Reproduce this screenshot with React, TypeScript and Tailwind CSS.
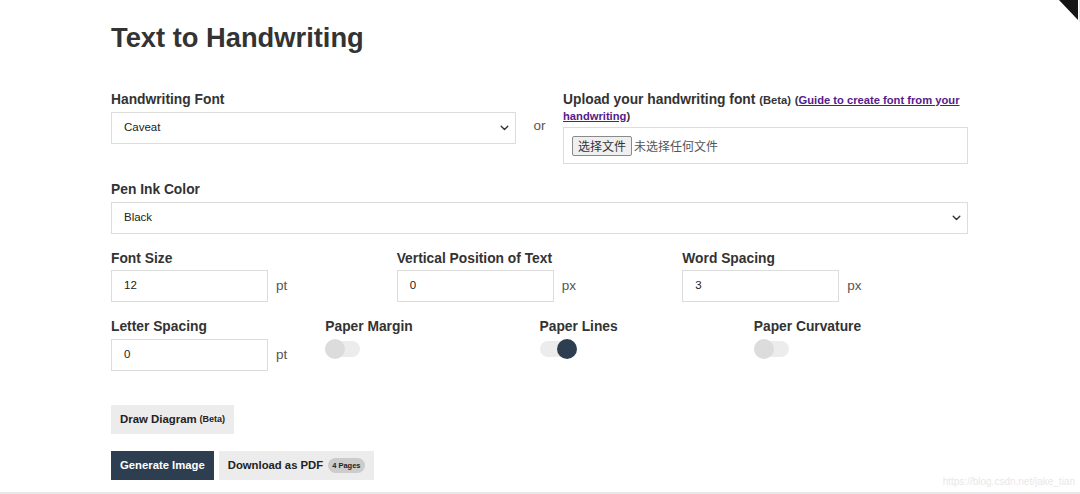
import React from "react";

function Chevron() {
  return (
    <svg width="9" height="6" viewBox="0 0 9 6" className="shrink-0">
      <path d="M1.2 1.2 L4.5 4.5 L7.8 1.2" fill="none" stroke="#333" strokeWidth="1.4" strokeLinecap="round" strokeLinejoin="round" />
    </svg>
  );
}

function Select({ value }: { value: string }) {
  return (
    <div className="h-[32px] border border-[#dcdcdc] flex items-center justify-between pl-[12px] pr-[6px] text-[11.5px] text-[#222] bg-white">
      <span>{value}</span>
      <Chevron />
    </div>
  );
}

function Label({ children }: { children: React.ReactNode }) {
  return <div className="text-[13.8px] leading-[16px] font-bold text-[#333]">{children}</div>;
}

function NumField({ label, value, unit, mt = "mt-[3px]" }: { label: string; value: string; unit: string; mt?: string }) {
  return (
    <div>
      <Label>{label}</Label>
      <div className={`${mt} flex items-center`}>
        <div className="w-[157px] h-[32px] border border-[#dcdcdc] pl-[12px] flex items-center text-[11.5px] text-[#222]">{value}</div>
        <span className="ml-[8px] text-[13.5px] text-[#555]">{unit}</span>
      </div>
    </div>
  );
}

function Toggle({ label, on }: { label: string; on: boolean }) {
  return (
    <div>
      <Label>{label}</Label>
      <div className="mt-[4px] h-[20px] flex items-center">
        <div className="relative w-[35px] h-[16px] rounded-full bg-[#ececec]">
          <div
            className={
              on
                ? "absolute right-[-2px] top-[-2px] w-[20px] h-[20px] rounded-full bg-[#2c3e50]"
                : "absolute left-0 top-[-2px] w-[20px] h-[20px] rounded-full bg-[#dcdcdc]"
            }
          />
        </div>
      </div>
    </div>
  );
}

export default function App() {
  return (
    <div className="relative bg-white min-h-[494px] overflow-hidden font-['Liberation_Sans',Arial,sans-serif] text-[#333]">
      <div className="ml-[111px] w-[857px] pt-[22px]">
        <h1 className="text-[27.3px] leading-[32px] font-bold text-[#333]">Text to Handwriting</h1>

        <div className="mt-[38px] flex">
          <div className="w-[405px]">
            <Label>Handwriting Font</Label>
            <div className="mt-[4px]">
              <Select value="Caveat" />
            </div>
          </div>
          <div className="w-[47px] flex justify-center pt-[26px]">
            <span className="text-[13.5px] leading-[16px] text-[#555]">or</span>
          </div>
          <div className="w-[405px]">
            <div className="text-[13.8px] leading-[16px] font-bold text-[#333]">
              Upload your handwriting font{" "}
              <span className="text-[11.2px] leading-[16px]">(Beta)</span>{" "}
              <span className="text-[11.2px] leading-[16px]">
                (<a className="text-[#551a8b] underline">Guide to create font from your handwriting</a>)
              </span>
            </div>
            <div className="mt-[3px] h-[37px] border border-[#dcdcdc] flex items-center pl-[8px]">
              <div className="h-[20px] px-[5px] flex items-center border border-[#8a8a8a] rounded-[2px] bg-[#efefef] text-[12px] text-[#333] font-['Noto_Sans_CJK_SC',sans-serif]">
                选择文件
              </div>
              <span className="ml-[2px] text-[12px] text-[#555] font-['Noto_Sans_CJK_SC',sans-serif]">未选择任何文件</span>
            </div>
          </div>
        </div>

        <div className="mt-[18px]">
          <Label>Pen Ink Color</Label>
          <div className="mt-[4px]">
            <Select value="Black" />
          </div>
        </div>

        <div className="mt-[17px] grid grid-cols-3">
          <NumField label="Font Size" value="12" unit="pt" />
          <NumField label="Vertical Position of Text" value="0" unit="px" />
          <NumField label="Word Spacing" value="3" unit="px" />
        </div>

        <div className="mt-[17px] grid grid-cols-4">
          <NumField label="Letter Spacing" value="0" unit="pt" mt="mt-[4px]" />
          <Toggle label="Paper Margin" on={false} />
          <Toggle label="Paper Lines" on={true} />
          <Toggle label="Paper Curvature" on={false} />
        </div>

        <div className="mt-[34px] flex">
          <button className="h-[29px] px-[9px] bg-[#ececec] text-[#222] text-[11.4px] font-bold flex items-center">
            Draw Diagram<span className="ml-[3px] text-[9px]">(Beta)</span>
          </button>
        </div>

        <div className="mt-[17px] flex gap-[5px]">
          <button className="h-[29px] px-[9px] bg-[#2c3e50] text-white text-[11.3px] font-bold flex items-center">
            Generate Image
          </button>
          <button className="h-[29px] pl-[9px] pr-[9px] bg-[#ececec] text-[#222] text-[11.3px] font-bold flex items-center">
            Download as PDF
            <span className="ml-[5px] h-[15px] px-[4px] rounded-full bg-[#cccccc] text-[7.5px] flex items-center">4 Pages</span>
          </button>
        </div>
      </div>

      <div className="mt-[12px] h-[2px] bg-[#e8e8e8]" />

      <div className="absolute right-[5px] bottom-[5px] text-[10px] text-[#e8e8e8]">https://blog.csdn.net/jake_tian</div>

      <svg className="absolute top-0 right-0" width="22" height="22" viewBox="0 0 22 22">
        <polygon points="1,0 20,0 20,20" fill="#151515" />
        <rect x="21" y="0" width="1" height="22" fill="#e6e6e6" />
      </svg>
    </div>
  );
}
